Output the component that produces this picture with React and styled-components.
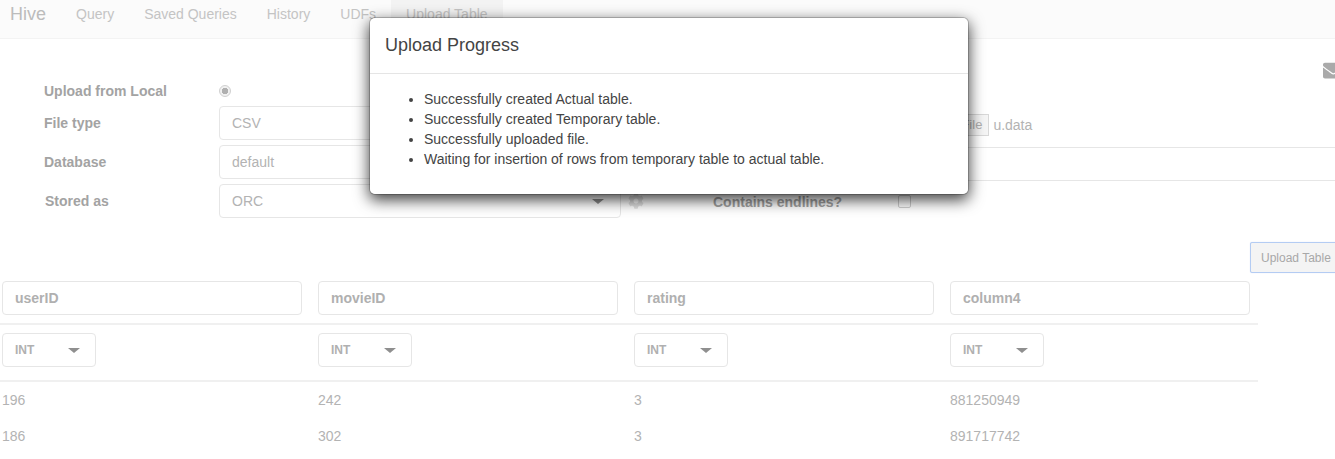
import React from 'react'
import styled, { createGlobalStyle } from 'styled-components'
import { FaCog, FaEnvelope } from 'react-icons/fa'

const GlobalStyle = createGlobalStyle`
  html, body {
    margin: 0;
    height: 459px;
    overflow: hidden;
    background: #fff;
    font-family: "Liberation Sans", Arial, sans-serif;
  }
`

const Page = styled.div`
  position: relative;
  width: 1344px;
  height: 459px;
  overflow: hidden;
`

const Nav = styled.nav`
  display: flex;
  height: 38px;
  background: #fbfbfb;
  border-bottom: 1px solid #f3f3f3;
`

const Brand = styled.span`
  padding: 0 15px 0 10px;
  font-size: 18px;
  line-height: 28px;
  color: #bcbcbc;
`

const NavLink = styled.a`
  padding: 0 15px;
  font-size: 14px;
  line-height: 28px;
  color: #c4c4c4;
  background: ${p => (p.$active ? '#f3f3f3' : 'transparent')};
`

const Toolbar = styled.div`
  display: flex;
  justify-content: flex-end;
  height: 40px;
  padding-top: 21px;
  box-sizing: border-box;
  color: #aaa;
  font-size: 21px;
`

const Form = styled.div`
  display: flex;
  padding-left: 44px;
`

const LeftCol = styled.div`
  display: flex;
  flex-direction: column;
  gap: 5px;
  width: 669px;
  flex-shrink: 0;
`

const RightCol = styled.div`
  display: flex;
  flex-direction: column;
  flex: 1;
  min-width: 0;
`

const Row = styled.div`
  display: grid;
  grid-template-columns: 175px 402px 30px;
  align-items: center;
  height: ${p => p.$height || 34}px;
  margin-bottom: ${p => p.$tight ? -2 : 0}px;
`

const Label = styled.label`
  font-size: 14px;
  font-weight: bold;
  color: #a3a3a3;
  margin-left: ${p => p.$shift || 0}px;
`

const Radio = styled.span`
  display: block;
  width: 12px;
  height: 12px;
  box-sizing: border-box;
  border: 1px solid #d0d0d0;
  border-radius: 50%;
  background: radial-gradient(circle, #b0b0b0 0 3px, #f1f1f1 3.5px);
`

const Field = styled.div`
  position: relative;
  height: 34px;
  box-sizing: border-box;
  padding: 0 12px;
  border: 1px solid #e6e6e6;
  border-radius: 4px;
  background: #fff;
  font-size: 14px;
  line-height: 32px;
  color: #b3b3b3;
`

const Caret = styled.span`
  position: absolute;
  right: ${p => p.$right || 15}px;
  top: 50%;
  margin-top: -2px;
  border-left: 6px solid transparent;
  border-right: 6px solid transparent;
  border-top: 5px solid #8f8f8f;
`

const Gear = styled(FaCog)`
  margin-left: 7px;
  font-size: 16px;
  color: #e2e2e2;
`

const FileRow = styled.div`
  display: flex;
  align-items: center;
  height: 68px;
  padding-top: 24px;
  box-sizing: border-box;
  font-size: 14px;
  color: #b3b3b3;
`

const FileButton = styled.span`
  height: 22px;
  box-sizing: border-box;
  margin-left: 193px;
  margin-right: 4px;
  padding: 0 6px;
  border: 1px solid #d8d8d8;
  background: #f5f5f5;
  font-size: 13px;
  line-height: 20px;
  color: #b0b0b0;
  white-space: nowrap;
`

const WideInput = styled.div`
  height: 34px;
  box-sizing: border-box;
  border: 1px solid #e6e6e6;
  border-right: 0;
`

const CheckRow = styled.div`
  display: flex;
  align-items: center;
  height: 34px;
  margin-top: 4px;
`

const CheckLabel = styled(Label)`
  width: 185px;
`

const Checkbox = styled.span`
  width: 13px;
  height: 13px;
  margin-bottom: 2px;
  box-sizing: border-box;
  border: 1px solid #d0d0d0;
  border-radius: 2px;
  background: #fff;
`

const Actions = styled.div`
  display: flex;
  justify-content: flex-end;
  margin-top: 23px;
  padding-right: 2px;
`

const UploadButton = styled.button`
  width: 92px;
  height: 31px;
  padding: 0 0 0 10px;
  text-align: left;
  border: 1px solid #b4ccf3;
  border-radius: 2px;
  background: #f4f4f4;
  box-shadow: 0 0 1px 0 #c6d8f6;
  font-family: inherit;
  font-size: 12px;
  color: #a8a8a8;
`

const Table = styled.div`
  width: 1258px;
  margin-top: 8px;
`

const TableRow = styled.div`
  display: grid;
  grid-template-columns: repeat(3, 316px) 310px;
  padding: ${p => p.$padding || '0'};
  border-bottom: ${p => (p.$ruled ? '2px solid #f0f0f0' : '0')};
`

const Cell = styled.div`
  padding-left: 2px;
  font-size: 14px;
  line-height: 36px;
  color: #b3b3b3;
`

const ColumnName = styled(Field)`
  width: 300px;
  font-size: 14px;
  font-weight: bold;
  color: #b0b0b0;
`

const TypeSelect = styled(Field)`
  width: 94px;
  font-size: 12px;
  font-weight: bold;
  color: #b0b0b0;
`

const Modal = styled.div`
  position: absolute;
  left: 369px;
  top: 17px;
  width: 600px;
  height: 178px;
  box-sizing: border-box;
  border: 1px solid rgba(0, 0, 0, 0.2);
  border-radius: 6px;
  background-clip: padding-box;
  background-color: #fff;
  box-shadow: 0 5px 15px rgba(0, 0, 0, 0.75);
  color: #444;
`

const ModalHeader = styled.div`
  height: 56px;
  box-sizing: border-box;
  padding-left: 15px;
  border-bottom: 1px solid #e5e5e5;
  font-size: 18px;
  line-height: 54px;
`

const ModalList = styled.ul`
  margin: 15px 0 0;
  padding: 0 0 0 54px;
  font-size: 14px;
  line-height: 20px;
`

const columns = ['userID', 'movieID', 'rating', 'column4']
const rows = [
  ['196', '242', '3', '881250949'],
  ['186', '302', '3', '891717742'],
]
const messages = [
  'Successfully created Actual table.',
  'Successfully created Temporary table.',
  'Successfully uploaded file.',
  'Waiting for insertion of rows from temporary table to actual table.',
]

export default function App() {
  return (
    <Page>
      <GlobalStyle />
      <Nav>
        <Brand>Hive</Brand>
        <NavLink>Query</NavLink>
        <NavLink>Saved Queries</NavLink>
        <NavLink>History</NavLink>
        <NavLink>UDFs</NavLink>
        <NavLink $active>Upload Table</NavLink>
      </Nav>
      <Toolbar>
        <FaEnvelope />
      </Toolbar>
      <Form>
        <LeftCol>
          <Row $height={24} $tight>
            <Label>Upload from Local</Label>
            <Radio />
          </Row>
          <Row>
            <Label>File type</Label>
            <Field>CSV<Caret /></Field>
          </Row>
          <Row>
            <Label>Database</Label>
            <Field>default<Caret /></Field>
          </Row>
          <Row>
            <Label $shift={1}>Stored as</Label>
            <Field>ORC<Caret $right={16} /></Field>
            <Gear />
          </Row>
        </LeftCol>
        <RightCol>
          <FileRow>
            <FileButton>Choose File</FileButton>
            u.data
          </FileRow>
          <WideInput />
          <CheckRow>
            <CheckLabel>Contains endlines?</CheckLabel>
            <Checkbox />
          </CheckRow>
        </RightCol>
      </Form>
      <Actions>
        <UploadButton>Upload Table</UploadButton>
      </Actions>
      <Table>
        <TableRow $ruled $padding="0 0 8px">
          {columns.map(name => (
            <Cell key={name}><ColumnName>{name}</ColumnName></Cell>
          ))}
        </TableRow>
        <TableRow $ruled $padding="8px 0 13px">
          {columns.map(name => (
            <Cell key={name}><TypeSelect>INT<Caret /></TypeSelect></Cell>
          ))}
        </TableRow>
        {rows.map(row => (
          <TableRow key={row[0]}>
            {row.map((value, j) => <Cell key={j}>{value}</Cell>)}
          </TableRow>
        ))}
      </Table>
      <Modal>
        <ModalHeader>Upload Progress</ModalHeader>
        <ModalList>
          {messages.map(text => <li key={text}>{text}</li>)}
        </ModalList>
      </Modal>
    </Page>
  )
}
